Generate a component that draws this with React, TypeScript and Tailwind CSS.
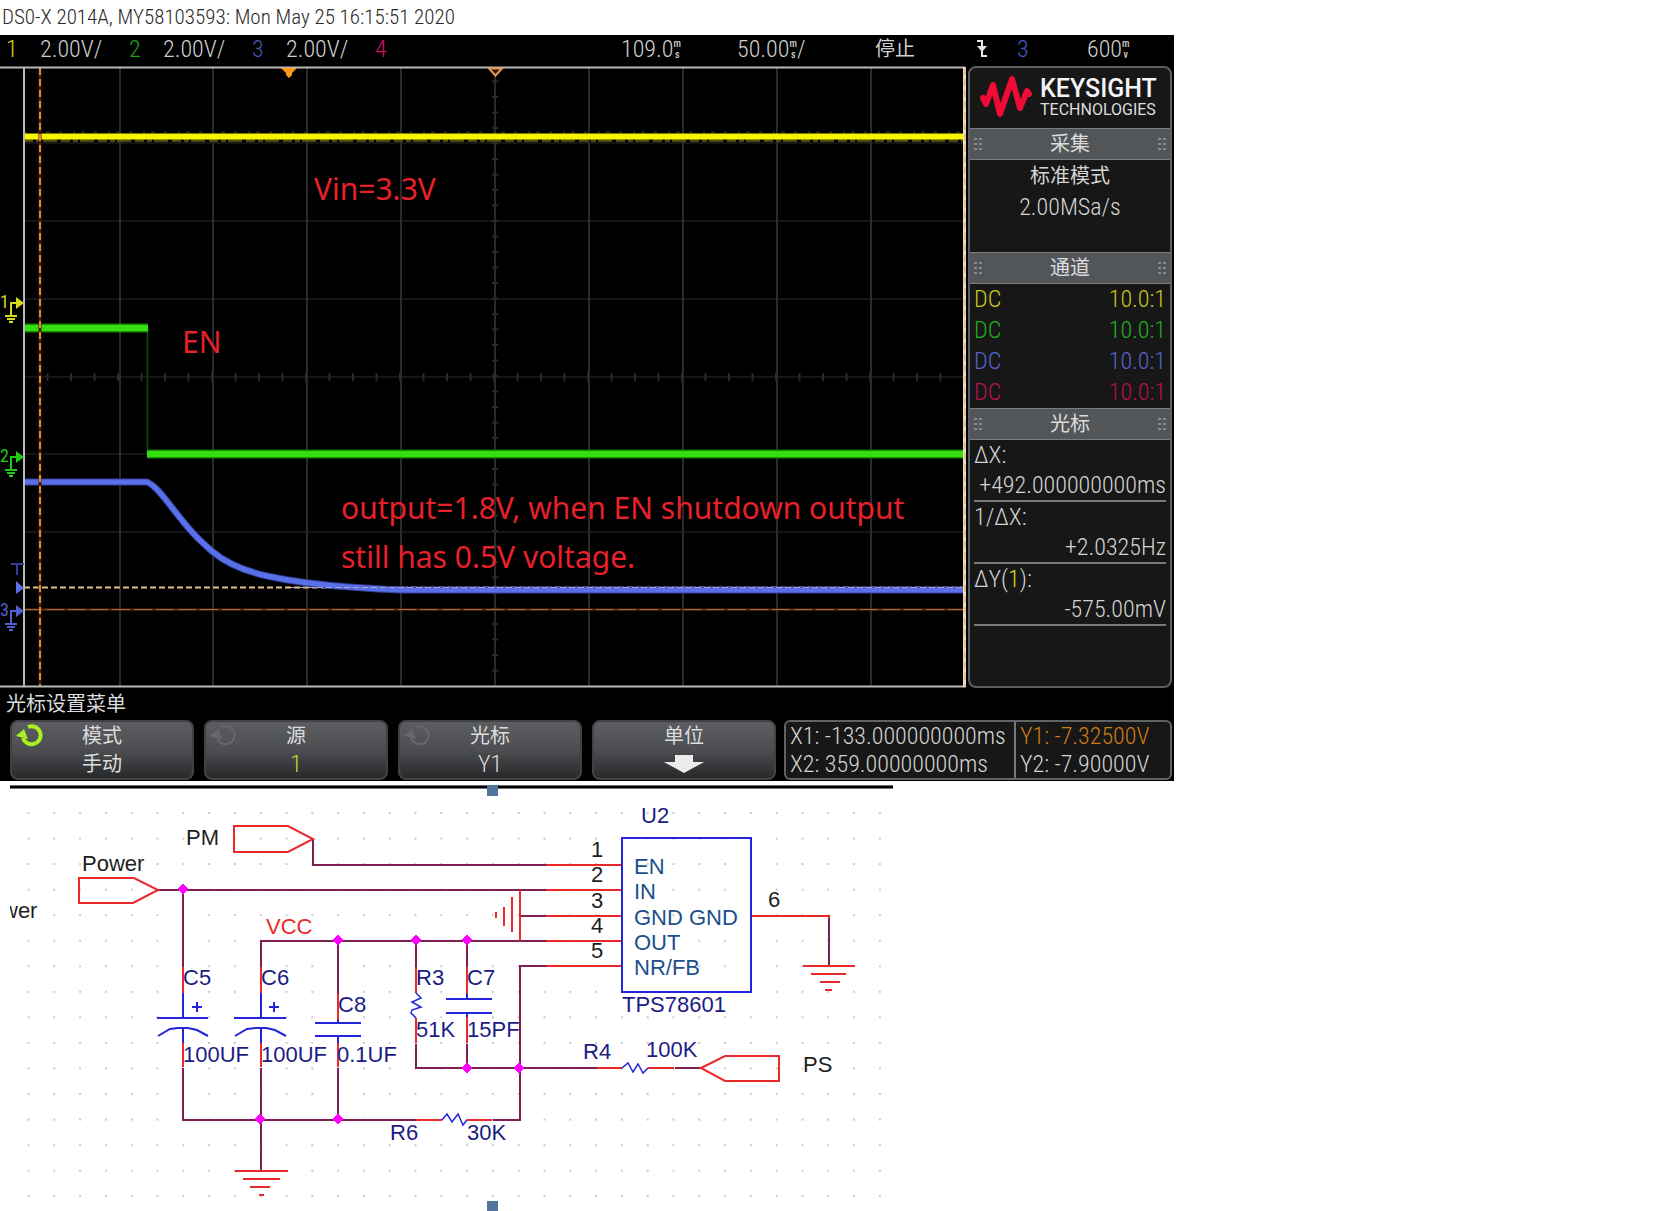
import type { ReactNode } from "react"

const scopeFont = "font-['Roboto_Condensed','Liberation_Sans_Narrow','Liberation_Sans','Noto_Sans_CJK_SC',sans-serif]"

const channels = [
  { id: 1, scale: "2.00", color: "text-[#d6d61e]" },
  { id: 2, scale: "2.00", color: "text-[#1fa51f]" },
  { id: 3, scale: "2.00", color: "text-[#4a56b8]" },
  { id: 4, scale: "", color: "text-[#d0155f]" },
]

const probes = [
  { id: 1, color: "text-[#c9c91f]" },
  { id: 2, color: "text-[#1fb01f]" },
  { id: 3, color: "text-[#5563cf]" },
  { id: 4, color: "text-[#b5124f]" },
]

const gridX = [120, 213, 307, 401, 495, 589, 683, 777, 871]
const gridY = [143, 221, 299, 377, 454, 532, 610]

const outputTrace =
  "M24 482H147C152 484 157 489 162 495C172 507 181 520 192 532C199 540 206 546 213 552C226 563 245 571 267 576C290 581 320 585 350 587C380 589 390 590 410 590H965"

function Unit({ top, bottom }: { top: string; bottom: string }) {
  return (
    <span className="inline-flex flex-col text-center text-[10px] leading-[11px] font-medium">
      <span>{top}</span>
      <span>{bottom}</span>
    </span>
  )
}

function StatusBar() {
  return (
    <div className="flex h-[31px] items-center pb-1 pl-1.5 text-2xl leading-none font-light text-[#d0d0d0]">
      <ul className="flex">
        {channels.map((c) => (
          <li key={c.id} className="flex w-[123px]">
            <span className={`w-[34px] ${c.color}`}>{c.id}</span>
            {c.scale && <span>{c.scale}V/</span>}
          </li>
        ))}
      </ul>
      <div className="ml-auto grid grid-cols-[116px_138px_101px_41px_70px_87px] items-center">
        <span className="flex items-center">
          109.0
          <Unit top="m" bottom="s" />
        </span>
        <span className="flex items-center">
          50.00
          <Unit top="m" bottom="s" />/
        </span>
        <span className="text-xl leading-none font-normal">停止</span>
        <svg className="h-[18px] w-3" viewBox="0 0 12 18" fill="none" stroke="#e4e4e4" strokeWidth="2">
          <path d="M1 1h5v15h5" />
          <path d="M1 6h10l-5 6z" fill="#e4e4e4" stroke="none" />
        </svg>
        <span className="text-[#4a56c8]">3</span>
        <span className="flex items-center">
          600
          <Unit top="m" bottom="v" />
        </span>
      </div>
    </div>
  )
}

function GroundMarker({ y, label, color }: { y: number; label: string; color: string }) {
  return (
    <g stroke={color} fill="none" strokeWidth="2">
      <text x="0" y={y + 5} fontSize="18" fill={color} stroke="none">
        {label}
      </text>
      <path d={`M10 ${y}h7M11 ${y}v13M5 ${y + 13}h12M7 ${y + 16}h8M9 ${y + 19}h4`} />
      <path d={`M16 ${y - 6}v12l8 -6z`} fill={color} stroke="none" />
    </g>
  )
}

function Plot() {
  return (
    <svg
      className="h-auto min-w-0 flex-1"
      viewBox="0 66 966 622"
      role="img"
      aria-label="Waveforms of Vin, EN and output"
    >
      <g stroke="#2a2a2a" strokeWidth="2">
        {gridX.map((x) => (
          <path key={x} d={`M${x} 68V686`} />
        ))}
        {gridY.map((y) => (
          <path key={y} d={`M24 ${y}H965`} strokeWidth="1" />
        ))}
        {Array.from({ length: 39 }, (_, i) => (
          <path key={i} d={`M${24 + (i + 1) * 23.5} 373v8`} />
        ))}
        {Array.from({ length: 39 }, (_, i) => (
          <path key={i} d={`M492 ${66 + (i + 1) * 15.5}h6`} />
        ))}
      </g>

      {/* channel 1 */}
      <path d="M24 132.500H965" stroke="#2c2c06" strokeWidth="2" strokeDasharray="3 11 2 6 4 9" />
      <path d="M24 140.500H965" stroke="#4c4c08" strokeWidth="3" strokeDasharray="9 3 5 2 14 4" />
      <path d="M24 136.500H965" stroke="#f6f600" strokeWidth="6" />
      {/* channel 2 */}
      <path d="M147.500 328V454" stroke="#0e3a0e" strokeWidth="2" />
      <path d="M24 328H148M147 454H965" stroke="#178a0a" strokeWidth="9" />
      <path d="M24 328H148M147 454H965" stroke="#35e010" strokeWidth="6" />
      {/* channel 3, over its trigger level */}
      <path d="M24 587.500H965" stroke="#e6c08a" strokeWidth="2" strokeDasharray="6 3" />
      <path d={outputTrace} fill="none" stroke="#34409c" strokeWidth="7" />
      <path d={outputTrace} fill="none" stroke="#5a70e8" strokeWidth="5" />
      <path d="M290 587.500H965" stroke="#b0a0d8" strokeWidth="1" strokeDasharray="6 3" />

      {/* cursors */}
      <path d="M24 609.500H965" stroke="#5a2c0a" strokeWidth="2" />
      <path d="M24 609.500H965" stroke="#b8642a" strokeWidth="1" strokeDasharray="18 4" />
      <path d="M40 68V686" stroke="#4a1c00" strokeWidth="3" />
      <path d="M40 68V686" stroke="#d98a3c" strokeWidth="2" strokeDasharray="7 4" />

      <path d="M0 67.500H965M0 686.500H966" stroke="#b9b9b9" strokeWidth="2" />
      <path d="M24 68V686" stroke="#b9b9b9" strokeWidth="2" />
      <path d="M964.500 67V687" stroke="#f0dcc0" strokeWidth="3" />
      <path d="M965 68V686" stroke="#e0a050" strokeWidth="1" strokeDasharray="7 4" />
      <path d="M281 68h16l-5 5v2l-3 3l-3 -3v-2z" fill="#ff9a1a" />
      <path d="M489 68.500h13l-6.500 7z" fill="#3a1400" stroke="#e09a58" strokeWidth="2" />

      <GroundMarker y={303} label="1" color="#d8d820" />
      <GroundMarker y={457} label="2" color="#20c81a" />
      <GroundMarker y={611} label="3" color="#4f5fd0" />
      <path d="M11 564H24M17 564V575" stroke="#34409c" strokeWidth="2" />
      <path d="M16 581v13l8 -6z" fill="#5a70e8" />

      <g className="font-['Noto_Sans',sans-serif]" fill="#e8202a" fontSize="30">
        <text x="314" y="200">Vin=3.3V</text>
        <text x="182" y="353">EN</text>
        <text x="341" y="519">output=1.8V, when EN shutdown output</text>
        <text x="341" y="568">still has 0.5V voltage.</text>
      </g>
    </svg>
  )
}

function Grip() {
  return (
    <svg className="h-3 w-2" viewBox="0 0 8 12" fill="#86898c" aria-hidden="true">
      <path d="M0 0h3v2h-3zM5 0h3v2h-3zM0 5h3v2h-3zM5 5h3v2h-3zM0 10h3v2h-3zM5 10h3v2h-3z" />
    </svg>
  )
}

function PanelHeading({ children }: { children: ReactNode }) {
  return (
    <h2 className="flex h-8 items-center justify-between border-y border-[#7b7e80] bg-[#535659] px-1 text-xl leading-none text-[#dcdcdc]">
      <Grip />
      {children}
      <Grip />
    </h2>
  )
}

function Readout({ label, value }: { label: ReactNode; value: string }) {
  return (
    <div className="mx-1 h-[62px] border-b-2 border-[#77797b] leading-[30px]">
      <dt>{label}</dt>
      <dd className="text-right">{value}</dd>
    </div>
  )
}

function Sidebar() {
  return (
    <aside className="flex w-[204px] shrink-0 flex-col rounded-lg border-2 border-[#5c5e60] bg-[#171717] text-2xl text-[#d4d4d4]">
      <div className="flex h-[60px] items-center gap-2 pb-0.5 pl-2.5">
        <svg className="h-[46px] w-[52px] shrink-0" viewBox="0 0 52 46" aria-label="Keysight logo">
          <path
            d="M3 24L6 30L13 11L20 40L32 5L40 34L47 17L49 20"
            fill="none"
            stroke="#ee0b35"
            strokeWidth="6"
            strokeLinejoin="round"
            strokeLinecap="round"
          />
        </svg>
        <div className="font-[Roboto,sans-serif]">
          <div className="text-[25px] leading-[26px] font-medium text-[#f4f4f4]">KEYSIGHT</div>
          <div className="text-base leading-4 text-[#dddddd]">TECHNOLOGIES</div>
        </div>
      </div>

      <PanelHeading>采集</PanelHeading>
      <div className="h-[92px] text-center leading-[30px]">
        <p className="text-xl leading-8">标准模式</p>
        <p className="font-light">2.00MSa/s</p>
      </div>

      <PanelHeading>通道</PanelHeading>
      <table className="w-full leading-[31px] font-light">
        <tbody>
          {probes.map((p) => (
            <tr key={p.id} className={p.color}>
              <td className="p-0 pl-1">DC</td>
              <td className="p-0 pr-1 text-right">10.0:1</td>
            </tr>
          ))}
        </tbody>
      </table>

      <PanelHeading>光标</PanelHeading>
      <dl className="font-light">
        <Readout label="ΔX:" value="+492.000000000ms" />
        <Readout label="1/ΔX:" value="+2.0325Hz" />
        <Readout
          label={
            <>
              ΔY(<span className="text-[#d6d61e]">1</span>):
            </>
          }
          value="-575.00mV"
        />
      </dl>
    </aside>
  )
}

function Knob({ active }: { active: boolean }) {
  const color = active ? "#a8f020" : "#66686a"
  return (
    <svg className="absolute top-0.5 left-1 h-6 w-7" viewBox="0 0 28 24" aria-hidden="true">
      <path d="M12 3A9 9 0 1 1 7 14" fill="none" stroke={color} strokeWidth={active ? 4 : 2} />
      <path d="M0 12L8 5L12 15z" fill={color} />
    </svg>
  )
}

function Softkey({ title, knob, children }: { title: string; knob?: ReactNode; children: ReactNode }) {
  return (
    <button
      type="button"
      className="relative flex h-[60px] w-[184px] min-w-0 flex-col items-center rounded-lg border-2 border-[#404244] bg-linear-to-b from-[#5b5d60] via-[#4c4e51] to-[#28292b] text-xl text-[#dcdcdc]"
    >
      {knob}
      <span className="leading-7">{title}</span>
      <span className="flex h-7 items-center leading-7">{children}</span>
    </button>
  )
}

function SoftkeyBar() {
  return (
    <div className="flex pr-0.5 pb-px pl-2.5">
      <div className="flex gap-2.5">
        <Softkey title="模式" knob={<Knob active />}>
          手动
        </Softkey>
        <Softkey title="源" knob={<Knob active={false} />}>
          <span className="text-2xl leading-7 font-light text-[#c6d62a]">1</span>
        </Softkey>
        <Softkey title="光标" knob={<Knob active={false} />}>
          <span className="text-2xl leading-7 font-light">Y1</span>
        </Softkey>
        <Softkey title="单位">
          <svg className="h-5 w-10" viewBox="0 0 40 20" fill="#ececec" aria-label="More">
            <path d="M11 1h18v7h11L20 19L0 8h11z" />
          </svg>
        </Softkey>
      </div>
      <div className="ml-2 flex flex-1 rounded-md border-2 border-[#606264] bg-[#171717] text-2xl leading-7 font-light whitespace-nowrap text-[#d4d4d4]">
        <div className="w-[230px] border-r-2 border-[#77797b] pl-1">
          <p>X1: -133.000000000ms</p>
          <p>X2: 359.00000000ms</p>
        </div>
        <div className="pl-1">
          <p className="text-[#d07c14]">Y1: -7.32500V</p>
          <p>Y2: -7.90000V</p>
        </div>
      </div>
    </div>
  )
}

const nodes = [
  [183, 889],
  [338, 940],
  [416, 940],
  [467, 940],
  [467, 1068],
  [519, 1068],
  [260, 1119],
  [338, 1119],
]

const partLabels: [number, number, string][] = [
  [641, 823, "U2"],
  [622, 1012, "TPS78601"],
  [183, 985, "C5"],
  [261, 985, "C6"],
  [338, 1012, "C8"],
  [416, 985, "R3"],
  [467, 985, "C7"],
  [416, 1037, "51K"],
  [467, 1037, "15PF"],
  [183, 1062, "100UF"],
  [261, 1062, "100UF"],
  [337, 1062, "0.1UF"],
  [390, 1140, "R6"],
  [467, 1140, "30K"],
  [583, 1059, "R4"],
  [646, 1057, "100K"],
]

const pinNames: [number, number, string][] = [
  [634, 874, "EN"],
  [634, 899, "IN"],
  [634, 925, "GND"],
  [689, 925, "GND"],
  [634, 950, "OUT"],
  [634, 975, "NR/FB"],
]

const pinNumbers: [number, number, string][] = [
  [591, 857, "1"],
  [591, 882, "2"],
  [591, 908, "3"],
  [591, 933, "4"],
  [591, 958, "5"],
  [768, 907, "6"],
]

const portLabels: [number, number, string][] = [
  [186, 845, "PM"],
  [82, 871, "Power"],
  [803, 1072, "PS"],
]

function Labels({ items }: { items: [number, number, string][] }) {
  return items.map(([x, y, text]) => (
    <text key={`${x}-${y}`} x={x} y={y}>
      {text}
    </text>
  ))
}

function Schematic() {
  return (
    <svg
      className="h-auto w-full max-w-[893px] font-['Liberation_Sans',sans-serif]"
      viewBox="0 781 893 430"
      role="img"
      aria-label="TPS78601 regulator circuit"
    >
      <defs>
        <pattern id="dots" x="27.500" y="812" width="25.800" height="25.550" patternUnits="userSpaceOnUse">
          <rect width="2" height="2" fill="#c9c9c9" />
        </pattern>
      </defs>
      <rect x="27" y="811" width="858" height="390" fill="url(#dots)" />

      <path d="M10 787H893" stroke="#6e6e6e" strokeWidth="4" />
      <path d="M10 787H893" stroke="#000000" strokeWidth="2" />

      {/* nets */}
      <g fill="none" stroke="#7d1f52" strokeWidth="2">
        <path d="M313 839V865H546M158 890H546M183 890V967M520 916H546" />
        <path d="M261 967V941H546M338 941V994M416 941V967M467 941V967M546 966H520V1120H493" />
        <path d="M416 1044V1068H597M467 1044V1068M675 1068H701" />
        <path d="M183 1068V1120H416M261 1068V1171M338 1068V1120M829 916V966" />
      </g>

      {/* ports, pins and grounds */}
      <g fill="none" stroke="#ea2a2a" strokeWidth="2">
        <path d="M234 826H288L313 839L288 852H234zM79 878H134L158 890L133 903H79z" />
        <path d="M701 1068L725 1056H779V1081H725z" />
        <path d="M546 865H622M546 890H622M546 916H622M546 941H622M546 966H622M751 916H829V918" />
        <path d="M183 967V993M261 967V993M338 994V1020M416 967V993M467 967V994" />
        <path d="M183 1043V1067M261 1043V1067M338 1043V1067M416 1018V1043M467 1017V1043" />
        <path d="M416 1120H442M467 1120H492M597 1068H622M648 1068H674" />
        <path d="M520 890V941M512 897V932M504 907V926M496 912V918" />
        <path d="M235 1171H288M243 1179H280M250 1187H270M259 1195H264" />
        <path d="M803 966H855M811 974H846M820 982H840M825 990H832" />
      </g>

      {/* part bodies */}
      <g fill="none" stroke="#2424dc" strokeWidth="2">
        <path d="M622 838H751V992H622z" />
        <path d="M183 993V1018M157 1018H208M158 1036L170 1029L178 1028H188L197 1030L208 1036M183 1028V1043" />
        <path d="M261 993V1018M234 1018H286M235 1036L247 1029L256 1028H266L275 1030L286 1036M261 1028V1043" />
        <path d="M338 1020V1023M315 1023H361M315 1036H361M338 1036V1043" />
        <path d="M467 994V999M446 999H492M446 1013H492M467 1013V1017" />
        <path d="M192 1007H202M197 1002V1012M269 1007H279M274 1002V1012" />
        <path
          d="M416 993L421 998L412 1002L421 1007L412 1010L411 1013L416 1018M442 1120L447 1114L452 1122L458 1114L463 1125L467 1120M622 1068L628 1063L633 1072L638 1064L643 1073L648 1068"
          strokeWidth="1.500"
        />
      </g>

      <g fill="#ff00ff">
        {nodes.map(([x, y]) => (
          <path key={`${x}-${y}`} d={`M${x - 5} ${y}l5 -5l5 5l-5 5z`} stroke="#ff00ff" strokeLinejoin="round" />
        ))}
      </g>

      <g fill="#1c1c84" fontSize="22">
        <Labels items={partLabels} />
      </g>
      <g fill="#1d4f8c" fontSize="22">
        <Labels items={pinNames} />
      </g>
      <g fill="#1e1e1e" fontSize="22">
        <Labels items={pinNumbers} />
        <Labels items={portLabels} />
        <svg x="10" y="896" width="60" height="30" viewBox="10 896 60 30">
          <text x="2" y="918">wer</text>
        </svg>
      </g>
      <text x="266" y="934" fontSize="22" fill="#ea2a2a">
        VCC
      </text>

      <path d="M487 785h11v11h-11zM487 1201h11v11h-11z" fill="#53749c" />
    </svg>
  )
}

export default function App() {
  return (
    <main className="min-h-screen bg-white">
      <section className={`w-full max-w-[1174px] ${scopeFont}`}>
        <h1 className="h-[35px] pl-0.5 text-[21px] leading-[35px] font-light text-[#2a2a2a]">
          DS0-X 2014A, MY58103593: Mon May 25 16:15:51 2020
        </h1>
        <div className="bg-black">
          <StatusBar />
          <div className="flex gap-0.5 pr-0.5">
            <Plot />
            <Sidebar />
          </div>
          <p className="h-8 pl-1.5 text-xl leading-8 text-[#dcdcdc]">光标设置菜单</p>
          <SoftkeyBar />
        </div>
      </section>
      <Schematic />
    </main>
  )
}
